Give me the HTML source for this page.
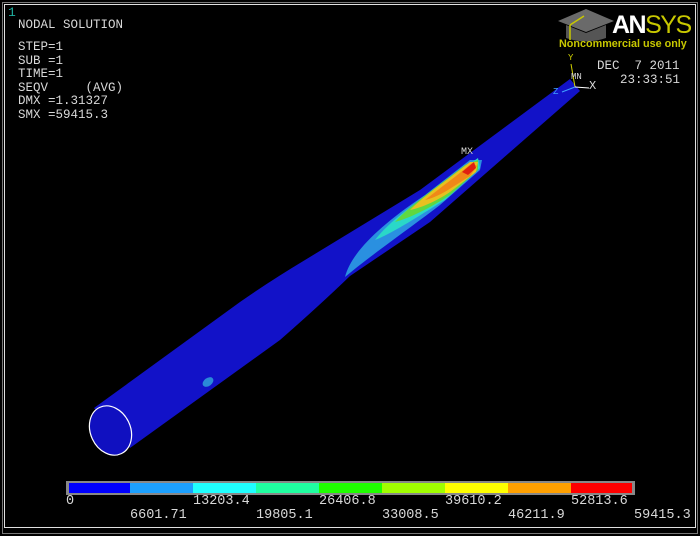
<!DOCTYPE html>
<html><head><style>
html,body{margin:0;padding:0;background:#000;}
body{width:700px;height:536px;overflow:hidden;position:relative;font-family:"Liberation Mono",monospace;}
.t{position:absolute;color:#d8d8d8;font-size:12.5px;line-height:13.5px;white-space:pre;}
.l{position:absolute;color:#d8d8d8;font-size:13.5px;line-height:14px;white-space:pre;}
</style></head><body>
<svg width="700" height="536" style="position:absolute;left:0;top:0">
<rect x="0" y="0" width="700" height="536" fill="#000"/>
<rect x="2.5" y="2.5" width="695" height="531" fill="none" stroke="#777" stroke-width="1"/>
<rect x="4.5" y="4.5" width="691" height="523" fill="none" stroke="#e0e0e0" stroke-width="1"/>
<path d="M94,408 L240,302 Q270,281 305,260 L420,190 L570,79 L580,91 L430,222 L350,276 Q320,305 280,340 L130,448 Z" fill="#1212c8"/>
<path d="M345,277 C352,250 385,222 425,195 L470,160 L482,160 L480,170 L440,205 C410,228 370,256 345,277 Z" fill="#2a90e0"/>
<path d="M375,240 C390,220 420,200 450,178 L478,158 L480,168 L445,200 C420,215 395,232 375,240 Z" fill="#2ad8c8"/>
<path d="M395,222 C410,205 440,185 465,165 L478,160 L478,170 L450,195 C430,208 410,218 395,222 Z" fill="#60d840"/>
<path d="M410,210 C425,195 450,178 470,162 L478,162 L476,172 L450,192 C435,202 420,208 410,210 Z" fill="#e8c020"/>
<path d="M425,200 C440,188 458,175 472,163 L477,166 L470,176 L448,190 C438,196 430,199 425,200 Z" fill="#f08818"/>
<path d="M462,172 L474,162 L476,168 L468,175 Z" fill="#e02010"/>
<ellipse cx="208" cy="382" rx="6" ry="4" transform="rotate(-37 208 382)" fill="#2a8ad8"/>
<ellipse cx="110.5" cy="430.5" rx="20" ry="25.5" transform="rotate(-25 110.5 430.5)" fill="#1010c0" stroke="#fff" stroke-width="1.2"/>
<line x1="575" y1="87" x2="571" y2="64" stroke="#d0d000" stroke-width="1"/>
<line x1="575" y1="87" x2="589" y2="88" stroke="#fff" stroke-width="1"/>
<line x1="575" y1="87" x2="562" y2="92" stroke="#40a0ff" stroke-width="1"/>
<rect x="66" y="481" width="569" height="14" fill="#888"/>
<rect x="69" y="483" width="61" height="10" fill="#0000ff"/>
<rect x="130" y="483" width="63" height="10" fill="#1ca0ff"/>
<rect x="193" y="483" width="63" height="10" fill="#20ffff"/>
<rect x="256" y="483" width="63" height="10" fill="#20ffa0"/>
<rect x="319" y="483" width="63" height="10" fill="#20ff00"/>
<rect x="382" y="483" width="63" height="10" fill="#a0ff00"/>
<rect x="445" y="483" width="63" height="10" fill="#ffff00"/>
<rect x="508" y="483" width="63" height="10" fill="#ffa000"/>
<rect x="571" y="483" width="61" height="10" fill="#ff0000"/>
<path d="M558,21 L586,9 L614,21 L586,32 Z" fill="#6a6a6a"/>
<path d="M566,25 L566,38 Q586,45 606,38 L606,25 L586,33 Z" fill="#555"/>
<line x1="570" y1="25" x2="570" y2="40" stroke="#c8c800" stroke-width="1.5"/>
<line x1="570" y1="25" x2="584" y2="16" stroke="#c8c800" stroke-width="1.5"/>
</svg>
<div class="t" style="left:8px;top:6px;color:#20b0a0;font-size:13px">1</div>
<div class="t" style="left:18px;top:19px">NODAL SOLUTION</div>
<div class="t" style="left:18px;top:41px">STEP=1
SUB =1
TIME=1
SEQV     (AVG)
DMX =1.31327
SMX =59415.3</div>
<div class="t" style="left:597px;top:60px">DEC  7 2011</div>
<div class="t" style="left:620px;top:74px">23:33:51</div>
<div class="t" style="left:461px;top:146px;font-size:10px">MX</div>
<div class="t" style="left:568px;top:52px;font-size:9px;color:#d0d000">Y</div>
<div class="t" style="left:571px;top:71px;font-size:9px">MN</div>
<div class="t" style="left:589px;top:80px;font-size:12px">X</div>
<div class="t" style="left:553px;top:86px;font-size:9px;color:#40a0ff">Z</div>
<div style="position:absolute;left:612px;top:11px;font-family:'Liberation Sans',sans-serif;font-weight:bold;font-size:25px;line-height:28px;letter-spacing:-1.5px;white-space:nowrap"><span style="color:#fff">AN</span><span style="color:#c8c800;font-weight:normal">SYS</span></div>
<div style="position:absolute;left:559px;top:38px;font-family:'Liberation Sans',sans-serif;font-weight:bold;font-size:10.8px;color:#c8c800;white-space:nowrap">Noncommercial use only</div>
<div class="l" style="left:66px;top:495px">0</div>
<div class="l" style="left:193px;top:495px">13203.4</div>
<div class="l" style="left:319px;top:495px">26406.8</div>
<div class="l" style="left:445px;top:495px">39610.2</div>
<div class="l" style="left:571px;top:495px">52813.6</div>
<div class="l" style="left:130px;top:509px">6601.71</div>
<div class="l" style="left:256px;top:509px">19805.1</div>
<div class="l" style="left:382px;top:509px">33008.5</div>
<div class="l" style="left:508px;top:509px">46211.9</div>
<div class="l" style="left:634px;top:509px">59415.3</div>
</body></html>
